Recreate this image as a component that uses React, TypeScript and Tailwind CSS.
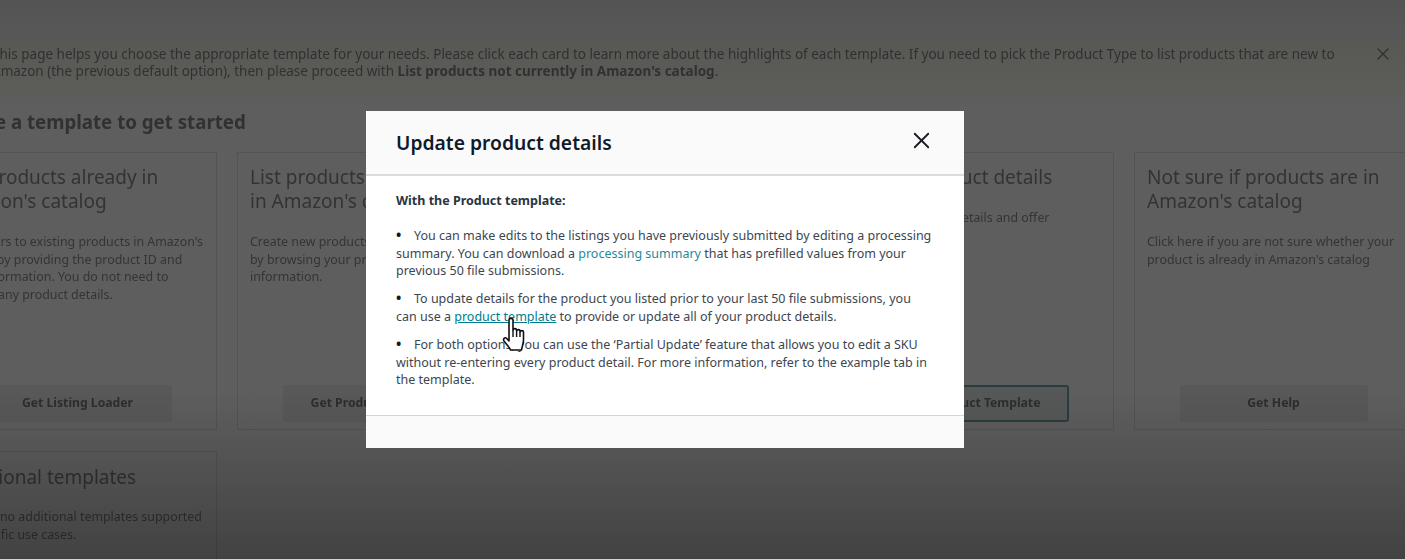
import React from "react";
import { X } from "lucide-react";

const font = { fontFamily: '"Noto Sans", "Open Sans", sans-serif' };

const cards = [
  {
    title: "List products already in Amazon's catalog",
    desc: (
      <>
        Add offers to existing products in Amazon's
        <br />
        catalog by providing the product ID and
        <br />
        offer information. You do not need to
        <br />
        provide any product details.
      </>
    ),
    button: "Get Listing Loader",
  },
  {
    title: "List products not currently in Amazon's catalog",
    desc: (
      <>
        Create new products in Amazon's catalog
        <br />
        by browsing your product type and all
        <br />
        information.
      </>
    ),
    button: "Get Product Template",
  },
  {
    title: "List variations of products",
    desc: "Add variations to your listings by browsing the product type.",
    button: "Get Product Template",
  },
  {
    title: "Update product details",
    desc: "Updating product details and offer information.",
    button: "Get Product Template",
    active: true,
  },
  {
    title: "Not sure if products are in Amazon's catalog",
    desc: "Click here if you are not sure whether your product is already in Amazon's catalog",
    button: "Get Help",
  },
];

type CardProps = { title: string; desc: React.ReactNode; button: string; active?: boolean };

const Card = ({ title, desc, button, active }: CardProps) => (
  <div className="h-[278px] border border-[#e2e2e2] px-3 pt-[12px] flex flex-col">
    <h3 className="text-[19px] leading-[24px] text-[#8a8a8a]">{title}</h3>
    <p className="mt-[20px] text-[12.400px] leading-[17.500px] text-[#8e8e8e]">{desc}</p>
    <div className="mt-auto mb-[7px] flex justify-center">
      <button
        className={
          active
            ? "h-[37px] w-[188px] rounded-[3px] border-2 border-[#6fa5ad] bg-[#e9eeee] text-[12.200px] font-bold text-[#7a7a7a]"
            : "h-[37px] w-[188px] rounded-[3px] bg-[#efefef] text-[12.200px] font-bold text-[#7a7a7a]"
        }
      >
        {button}
      </button>
    </div>
  </div>
);

const Bullet = () => <span className="inline-block w-[18px] text-[14px] font-bold leading-[0] text-[#16191f]">•</span>;

const Cursor = () => (
  <svg className="absolute left-[502px] top-[317px]" width="26" height="35" viewBox="0 0 26 35" fill="none">
    <path
      d="M7 3c0-2 4-2 4 0v10c0-1.800 3.600-1.800 3.600 0v1c0-1.800 3.400-1.800 3.400 0v1c0-1.800 3.500-1.800 3.500 0v8c0 4-1.500 6-2 10H8.500c-1-3-4-5.500-6.500-9-1.300-2 .8-4 2.500-2.800L7 24Z"
      fill="#fff"
      stroke="#111"
      strokeWidth="1.600"
      strokeLinejoin="round"
    />
    <path d="M11 13v7M14.600 14v6M18 15v5" stroke="#111" strokeWidth="1.400" />
  </svg>
);

export default function App() {
  return (
    <div className="relative h-[559px] w-[1405px] overflow-hidden bg-white" style={font}>
      {/* page behind the dialog */}
      <div className="ml-[-62px] w-[1500px] blur-[0.7px]">
        <div className="h-[40px]" />
        <div className="relative h-[57px] w-[1467px] bg-[#fffff4] pl-[54px] pt-[6px] text-[13.500px] leading-[17px] text-[#8a8a8a]">
          <p className="w-[1400px]">
            This page helps you choose the appropriate template for your needs. Please click each card to learn more about the highlights of each template. If you need to pick the Product Type to list products that are new to
            <br />
            Amazon (the previous default option), then please proceed with <b>List products not currently in Amazon's catalog</b>.
          </p>
          <X className="absolute left-[1435px] top-[4px] size-[20px] text-[#8a8a8a]" strokeWidth={1.600} />
        </div>
        <h2 className="mt-[11px] text-[18.700px] font-bold leading-[28px] text-[#858585]">Choose a template to get started</h2>
        <div className="mt-[16px] grid grid-cols-[repeat(5,279px)] gap-x-[20px] gap-y-[21px]">
          {cards.map((c) => (
            <Card key={c.title} {...c} />
          ))}
          <div className="h-[278px] border border-[#e2e2e2] px-3 pt-[13px]">
            <h3 className="text-[19px] leading-[24px] text-[#8a8a8a]">Additional templates</h3>
            <p className="mt-[19px] text-[12.400px] leading-[17.500px] text-[#8e8e8e]">There is no additional templates supported for specific use cases.</p>
          </div>
        </div>
      </div>

      {/* overlay */}
      <div className="absolute inset-0 bg-[linear-gradient(to_bottom,rgba(0,0,0,0.67)_0%,rgba(0,0,0,0.63)_20%,rgba(0,0,0,0.63)_70%,rgba(0,0,0,0.74)_100%)]" />

      {/* dialog */}
      <div className="absolute left-[366px] top-[111px] flex h-[337px] w-[598px] flex-col bg-white text-[#3d4650]">
        <div className="flex h-[65px] items-center justify-between border-b-2 border-[#dcdcdc] bg-[#fafafa] pl-[30px] pr-[29px]">
          <h2 className="pt-[2px] text-[19.300px] font-semibold text-[#0f1b2a]">Update product details</h2>
          <X className="mb-[4px] size-[27px] text-[#16191f]" strokeWidth={1.600} />
        </div>
        <div className="flex-1 px-[30px] pt-[16px] text-[12.500px] leading-[17.800px]">
          <p className="font-bold text-[#2a343d]">With the Product template:</p>
          <p className="mt-[17px]">
            <Bullet />
            You can make edits to the listings you have previously submitted by editing a processing summary. You can download a <span className="text-[#1f8a9c]">processing summary</span> that has prefilled values from your previous 50 file submissions.
          </p>
          <p className="mt-[10px]">
            <Bullet />
            To update details for the product you listed prior to your last 50 file submissions, you can use a <span className="text-[#007c8f] underline">product template</span> to provide or update all of your product details.
          </p>
          <p className="mt-[10px]">
            <Bullet />
            For both options, you can use the ‘Partial Update’ feature that allows you to edit a SKU without re-entering every product detail. For more information, refer to the example tab in the template.
          </p>
        </div>
        <div className="h-[33px] border-t border-[#d5d5d5] bg-[#fafafa]" />
      </div>

      <Cursor />
    </div>
  );
}
